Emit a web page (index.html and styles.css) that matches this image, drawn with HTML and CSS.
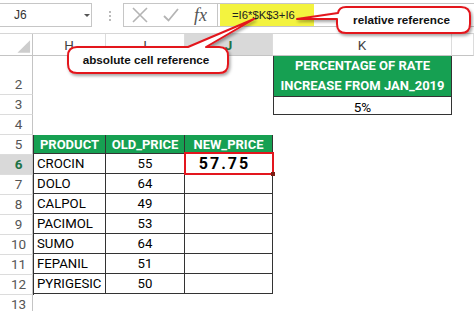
FILE: index.html
```html
<!DOCTYPE html>
<html>
<head>
<meta charset="utf-8">
<link rel="stylesheet" href="styles.css">
</head>
<body>
<div class="app">
  <div class="fbar">
    <div class="namebox"><span class="nb-text">J6</span><span class="dd"></span></div>
    <div class="grip">
      <svg width="31" height="24" viewBox="0 0 31 24"><circle cx="18" cy="9" r="0.9" fill="#9a9a9a"/><circle cx="18" cy="13" r="0.9" fill="#9a9a9a"/><circle cx="18" cy="17" r="0.9" fill="#9a9a9a"/></svg>
    </div>
    <div class="fbtns">
      <svg class="ico-x" width="18" height="18" viewBox="0 0 18 18"><path d="M2 2 L16 16 M16 2 L2 16" stroke="#b4b4b4" stroke-width="1.6" fill="none"/></svg>
      <svg class="ico-ok" width="16" height="16" viewBox="0 0 16 16"><path d="M1 9 L5.5 13.5 L15 2" stroke="#b4b4b4" stroke-width="1.8" fill="none"/></svg>
      <span class="fx">fx</span>
    </div>
    <div class="finput"><span class="hl">=I6*$K$3+I6</span></div>
  </div>

  <div class="sheet">
    <div class="ch corner"><svg width="33" height="22" viewBox="0 0 33 22"><polygon points="18,19 31,19 31,6" fill="#cdcdcd"/></svg></div>
    <div class="ch">H</div>
    <div class="ch">I</div>
    <div class="ch sel">J</div>
    <div class="ch">K</div>
    <div class="ch"></div>

    <div class="rh tall">2</div>
    <div class="rh">3</div>
    <div class="rh">4</div>
    <div class="rh">5</div>
    <div class="rh sel">6</div>
    <div class="rh">7</div>
    <div class="rh">8</div>
    <div class="rh">9</div>
    <div class="rh">10</div>
    <div class="rh">11</div>
    <div class="rh">12</div>
    <div class="rh">13</div>

    <div class="kblock">
      <div class="kh">PERCENTAGE OF RATE<br>INCREASE FROM JAN_2019</div>
      <div class="kv">5%</div>
    </div>

    <div class="tbl">
      <div class="c hd">PRODUCT</div><div class="c hd">OLD_PRICE</div><div class="c hd">NEW_PRICE</div>
      <div class="c tx">CROCIN</div><div class="c nm">55</div><div class="c nm active">57.75</div>
      <div class="c tx">DOLO</div><div class="c nm">64</div><div class="c"></div>
      <div class="c tx">CALPOL</div><div class="c nm">49</div><div class="c"></div>
      <div class="c tx">PACIMOL</div><div class="c nm">53</div><div class="c"></div>
      <div class="c tx">SUMO</div><div class="c nm">64</div><div class="c"></div>
      <div class="c tx">FEPANIL</div><div class="c nm">51</div><div class="c"></div>
      <div class="c tx">PYRIGESIC</div><div class="c nm">50</div><div class="c"></div>
    </div>
  </div>

  <svg class="callouts" width="474" height="311" viewBox="0 0 474 311">
    <defs>
      <filter id="sh" x="-10%" y="-30%" width="130%" height="180%">
        <feDropShadow dx="1.5" dy="2" stdDeviation="1.4" flood-color="#000" flood-opacity="0.35"/>
      </filter>
    </defs>
    <path filter="url(#sh)" d="M77 47 H188 L254 19 L206 47 H219 Q228 47 228 56 V64 Q228 73 219 73 H77 Q68 73 68 64 V56 Q68 47 77 47 Z" fill="#fff" stroke="#e3161e" stroke-width="2" stroke-linejoin="round"/>
    <path filter="url(#sh)" d="M346 7 H461 Q470 7 470 16 V24 Q470 33 461 33 H346 Q337 33 337 24 V19 L297 19 L338 13 Q339 7 346 7 Z" fill="#fff" stroke="#e3161e" stroke-width="2" stroke-linejoin="round"/>
  </svg>
  <div class="note note-abs">absolute cell reference</div>
  <div class="note note-rel">relative reference</div>
</div>
</body>
</html>
```

FILE: styles.css
```css
* { box-sizing: border-box; margin: 0; padding: 0; }
html, body { width: 474px; height: 311px; overflow: hidden; background: #fff; }
body { font-family: Roboto, "Liberation Sans", Arial, sans-serif; color: #000; }
.app { position: relative; width: 474px; height: 311px; }

/* formula bar */
.fbar { display: flex; align-items: flex-start; height: 33px; padding-top: 3px; }
.namebox { display: flex; align-items: center; width: 93px; height: 24px; margin-left: -1px; border: 1px solid #c6c6c6; padding-left: 14px; font-family: "Liberation Sans", Arial, sans-serif; font-size: 12px; color: #333; }
.dd { margin-left: auto; margin-right: 1px; width: 0; height: 0; border-left: 3px solid transparent; border-right: 3px solid transparent; border-top: 3px solid #555; }
.grip { width: 31px; height: 24px; }
.grip svg { display: block; }
.fbtns { display: flex; align-items: center; width: 95px; height: 24px; border: 1px solid #c6c6c6; }
.ico-x { margin-left: 7px; }
.ico-ok { margin-left: 14px; }
.fx { margin-left: 15px; font-family: "Liberation Serif", "Times New Roman", serif; font-style: italic; font-size: 18px; color: #555; line-height: 20px; }
.finput { flex: 1; height: 24px; border-top: 1px solid #c6c6c6; border-bottom: 1px solid #c6c6c6; padding-left: 2px; }
.hl { display: block; width: 94px; height: 22px; background: #f3f33f; padding-left: 12px; font-family: "Liberation Sans", Arial, sans-serif; font-size: 11.3px; line-height: 22px; color: #222; }

/* sheet */
.sheet { display: grid; grid-template-columns: 33px 73px 79px 88px 179px 1fr; grid-template-rows: 22px 39px repeat(11, 20px); border-top: 1px solid #d6d6d6; }
.ch { display: flex; align-items: center; justify-content: center; border-right: 1px solid #dcdcdc; border-bottom: 1px solid #c4c4c4; font-size: 13.5px; color: #444; padding-top: 1px; }
.ch.corner { border-right: 1px solid #c4c4c4; }
.ch.corner svg { display: block; }
.ch.sel { background: #d9d9d9; color: #217346; font-weight: bold; }
.rh { grid-column: 1; display: flex; align-items: flex-end; justify-content: center; padding-left: 5px; padding-bottom: 2px; border-bottom: 1px solid #dcdcdc; border-right: 1px solid #c4c4c4; font-size: 13.5px; color: #555; }
.rh.sel { background: #d9d9d9; color: #217346; font-weight: bold; }

.kblock { grid-column: 5; grid-row: 2 / 4; display: grid; grid-template-rows: 1fr 20px; border: 1px solid #333; border-top: none; }
.kh { display: flex; align-items: center; justify-content: center; text-align: center; background: #16a052; color: #fff; font-weight: bold; font-size: 13px; line-height: 20px; border-bottom: 1px solid #333; }
.kv { display: flex; align-items: center; justify-content: center; font-size: 13.5px; }

.tbl { grid-column: 2 / 5; grid-row: 5 / 13; display: grid; grid-template-columns: 72px 79px 88px; grid-template-rows: 19px repeat(7, 20px); border-left: 1px solid #333; }
.c { display: flex; align-items: center; border-right: 1px solid #333; border-bottom: 1px solid #333; font-size: 13.2px; }
.c.hd { justify-content: center; background: #16a052; color: #fff; font-weight: bold; font-size: 13px; }
.c.tx { padding-left: 3px; }
.c.nm { justify-content: center; }
.c.active { position: relative; font-weight: bold; font-size: 16px; letter-spacing: 2px; padding-right: 8px; }
.c.active::after { content: ""; position: absolute; left: -1px; top: -2px; right: -2px; bottom: -2px; border: 2px solid #e3161e; }
.c.active::before { content: ""; position: absolute; right: -3px; bottom: -3px; width: 4px; height: 4px; background: #7a1d12; z-index: 1; }

/* callouts */
.callouts { position: absolute; left: 0; top: 0; pointer-events: none; }
.note { position: absolute; font-family: "Liberation Sans", Arial, sans-serif; font-weight: bold; font-size: 11.7px; color: #111; text-align: center; line-height: 26px; height: 26px; }
.note-abs { left: 66px; top: 47px; width: 160px; }
.note-rel { left: 335px; top: 7px; width: 133px; }
```
